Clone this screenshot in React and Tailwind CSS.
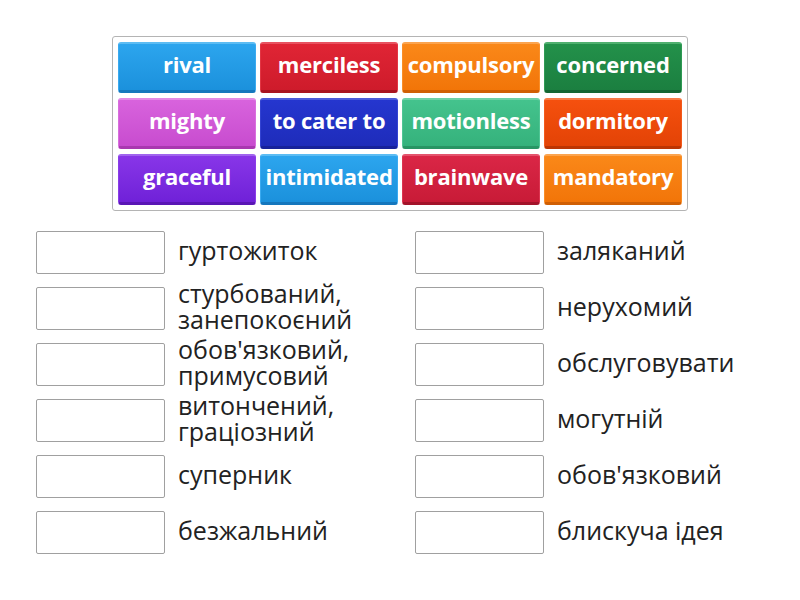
import React from "react";

const tiles = [
  { t: "rival", c: "from-[#2ca5ee] to-[#1b91dc] border-t-[#5cbcf3] border-b-[#1577bd] border-x-[#3aaaf0]" },
  { t: "merciless", c: "from-[#e02535] to-[#ce1b2b] border-t-[#e85260] border-b-[#a8141f] border-x-[#e23543]" },
  { t: "compulsory", c: "from-[#fa8818] to-[#f27508] border-t-[#fba44f] border-b-[#d05f04] border-x-[#f98e28]" },
  { t: "concerned", c: "from-[#23914a] to-[#1b7f40] border-t-[#4fb06f] border-b-[#136633] border-x-[#2f9a54]" },
  { t: "mighty", c: "from-[#d863dd] to-[#c84ccf] border-t-[#e38ae6] border-b-[#a938b0] border-x-[#d86fdd]" },
  { t: "to cater to", c: "from-[#2536cf] to-[#1e2cba] border-t-[#4b5ad9] border-b-[#17229a] border-x-[#3343d2]" },
  { t: "motionless", c: "from-[#44c38d] to-[#35b27c] border-t-[#6dd1a7] border-b-[#289564] border-x-[#4fc594]" },
  { t: "dormitory", c: "from-[#f5500e] to-[#e34306] border-t-[#f77a46] border-b-[#bc3503] border-x-[#f35a1c]" },
  { t: "graceful", c: "from-[#8835e8] to-[#7021d8] border-t-[#a164ee] border-b-[#5a16b5] border-x-[#8a3de8]" },
  { t: "intimidated", c: "from-[#2ca5ee] to-[#1b91dc] border-t-[#5cbcf3] border-b-[#1577bd] border-x-[#3aaaf0]" },
  { t: "brainwave", c: "from-[#da2646] to-[#c81b37] border-t-[#e4546d] border-b-[#a3132a] border-x-[#dc3450]" },
  { t: "mandatory", c: "from-[#fa8818] to-[#f27508] border-t-[#fba44f] border-b-[#d05f04] border-x-[#f98e28]" },
];

const left = [
  ["гуртожиток"],
  ["стурбований,", "занепокоєний"],
  ["обов'язковий,", "примусовий"],
  ["витончений,", "граціозний"],
  ["суперник"],
  ["безжальний"],
];
const right = [
  ["заляканий"],
  ["нерухомий"],
  ["обслуговувати"],
  ["могутній"],
  ["обов'язковий"],
  ["блискуча ідея"],
];

function Row({ lines }) {
  return (
    <div className="flex items-center h-[43px]">
      <div className="w-[129px] h-[43px] shrink-0 border border-[#a0a0a0] rounded-[2px] bg-white" />
      <div className="ml-[13px] -mt-[6px] text-[25px] leading-[26px] text-[#222]">
        {lines.map((l, i) => (
          <div key={i}>{l}</div>
        ))}
      </div>
    </div>
  );
}

export default function App() {
  return (
    <div
      className="w-[800px] h-[600px] bg-white pt-[36px]"
      style={{ fontFamily: '"Open Sans", "Noto Sans", sans-serif' }}
    >
      <div className="mx-auto w-[576px] border border-[#b4b4b4] rounded-[3px] p-[5px] grid grid-cols-4 gap-x-[4px] gap-y-[5px]">
        {tiles.map((x) => (
          <div
            key={x.t}
            className={`h-[51px] rounded-[3px] bg-gradient-to-b border-t-2 border-b-[3px] border-x ${x.c} flex items-center justify-center text-white font-bold text-[22px] tracking-[-0.2px] whitespace-nowrap`}
          >
            <span className="-mt-[5px]">{x.t}</span>
          </div>
        ))}
      </div>
      <div className="mt-[20px] ml-[36px] grid grid-cols-[379px_379px] gap-y-[13px]">
        {left.map((l, i) => (
          <React.Fragment key={i}>
            <Row lines={l} />
            <Row lines={right[i]} />
          </React.Fragment>
        ))}
      </div>
    </div>
  );
}
